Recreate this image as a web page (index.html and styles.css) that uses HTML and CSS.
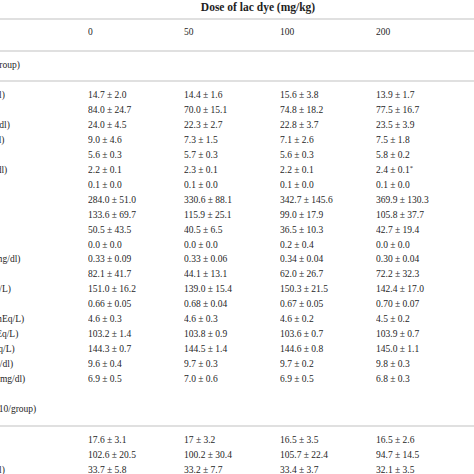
FILE: index.html
```html
<!DOCTYPE html>
<html lang="en">
<head>
<meta charset="utf-8">
<title>Serum biochemistry – lac dye</title>
<link rel="stylesheet" href="styles.css">
</head>
<body>
<div class="crop">
<table class="tbl">
  <colgroup>
    <col class="c-label">
    <col class="c-val">
    <col class="c-val">
    <col class="c-val">
    <col class="c-last">
  </colgroup>
  <thead>
    <tr class="title-row"><th colspan="5" class="title">Dose of lac dye (mg/kg)</th></tr>
    <tr class="dose-row"><th></th><th>0</th><th>50</th><th>100</th><th>200</th></tr>
  </thead>
  <tbody>
    <tr class="group-head"><td colspan="5">Main (n = 10/group)</td></tr>
    <tr class="first"><td class="lbl">T-Cho (mg/dl)</td><td>14.7 ± 2.0</td><td>14.4 ± 1.6</td><td>15.6 ± 3.8</td><td>13.9 ± 1.7</td></tr>
    <tr><td class="lbl">TC (mg/dl)</td><td>84.0 ± 24.7</td><td>70.0 ± 15.1</td><td>74.8 ± 18.2</td><td>77.5 ± 16.7</td></tr>
    <tr><td class="lbl">HDL-C (mg/dl)</td><td>24.0 ± 4.5</td><td>22.3 ± 2.7</td><td>22.8 ± 3.7</td><td>23.5 ± 3.9</td></tr>
    <tr><td class="lbl">NEFA (mg/dl)</td><td>9.0 ± 4.6</td><td>7.3 ± 1.5</td><td>7.1 ± 2.6</td><td>7.5 ± 1.8</td></tr>
    <tr><td class="lbl">TP (g/dl)</td><td>5.6 ± 0.3</td><td>5.7 ± 0.3</td><td>5.6 ± 0.3</td><td>5.8 ± 0.2</td></tr>
    <tr><td class="lbl">Albumin (g/dl)</td><td>2.2 ± 0.1</td><td>2.3 ± 0.1</td><td>2.2 ± 0.1</td><td>2.4 ± 0.1<sup class="sig">*</sup></td></tr>
    <tr><td class="lbl">TB (mg/dl)</td><td>0.1 ± 0.0</td><td>0.1 ± 0.0</td><td>0.1 ± 0.0</td><td>0.1 ± 0.0</td></tr>
    <tr><td class="lbl">ALP (U/L)</td><td>284.0 ± 51.0</td><td>330.6 ± 88.1</td><td>342.7 ± 145.6</td><td>369.9 ± 130.3</td></tr>
    <tr><td class="lbl">LDH (U/L)</td><td>133.6 ± 69.7</td><td>115.9 ± 25.1</td><td>99.0 ± 17.9</td><td>105.8 ± 37.7</td></tr>
    <tr><td class="lbl">ALT (U/L)</td><td>50.5 ± 43.5</td><td>40.5 ± 6.5</td><td>36.5 ± 10.3</td><td>42.7 ± 19.4</td></tr>
    <tr><td class="lbl">γ-GT (U/L)</td><td>0.0 ± 0.0</td><td>0.0 ± 0.0</td><td>0.2 ± 0.4</td><td>0.0 ± 0.0</td></tr>
    <tr><td class="lbl">Creatinine (mg/dl)</td><td>0.33 ± 0.09</td><td>0.33 ± 0.06</td><td>0.34 ± 0.04</td><td>0.30 ± 0.04</td></tr>
    <tr><td class="lbl">TG (mg/dl)</td><td>82.1 ± 41.7</td><td>44.1 ± 13.1</td><td>62.0 ± 26.7</td><td>72.2 ± 32.3</td></tr>
    <tr><td class="lbl">Amylase (IU/L)</td><td>151.0 ± 16.2</td><td>139.0 ± 15.4</td><td>150.3 ± 21.5</td><td>142.4 ± 17.0</td></tr>
    <tr><td class="lbl">A/G ratio</td><td>0.66 ± 0.05</td><td>0.68 ± 0.04</td><td>0.67 ± 0.05</td><td>0.70 ± 0.07</td></tr>
    <tr><td class="lbl">Potassium (mEq/L)</td><td>4.6 ± 0.3</td><td>4.6 ± 0.3</td><td>4.6 ± 0.2</td><td>4.5 ± 0.2</td></tr>
    <tr><td class="lbl">Chloride (mEq/L)</td><td>103.2 ± 1.4</td><td>103.8 ± 0.9</td><td>103.6 ± 0.7</td><td>103.9 ± 0.7</td></tr>
    <tr><td class="lbl">Sodium (mEq/L)</td><td>144.3 ± 0.7</td><td>144.5 ± 1.4</td><td>144.6 ± 0.8</td><td>145.0 ± 1.1</td></tr>
    <tr><td class="lbl">Calcium (mg/dl)</td><td>9.6 ± 0.4</td><td>9.7 ± 0.3</td><td>9.7 ± 0.2</td><td>9.8 ± 0.3</td></tr>
    <tr class="last"><td class="lbl">Phosphorus (mg/dl)</td><td>6.9 ± 0.5</td><td>7.0 ± 0.6</td><td>6.9 ± 0.5</td><td>6.8 ± 0.3</td></tr>
  </tbody>
  <tbody>
    <tr class="group-head"><td colspan="5">Recovery (n = 10/group)</td></tr>
    <tr class="first"><td class="lbl">ALT (U/L)</td><td>17.6 ± 3.1</td><td>17 ± 3.2</td><td>16.5 ± 3.5</td><td>16.5 ± 2.6</td></tr>
    <tr><td class="lbl">AST (U/L)</td><td>102.6 ± 20.5</td><td>100.2 ± 30.4</td><td>105.7 ± 22.4</td><td>94.7 ± 14.5</td></tr>
    <tr><td class="lbl">T-Cho (mg/dl)</td><td>33.7 ± 5.8</td><td>33.2 ± 7.7</td><td>33.4 ± 3.7</td><td>32.1 ± 3.5</td></tr>
    <tr><td class="lbl">TC (mg/dl)</td><td>72.4 ± 11.9</td><td>70.8 ± 13.6</td><td>75.1 ± 12.2</td><td>69.3 ± 10.4</td></tr>
  </tbody>
</table>
</div>
</body>
</html>
```

FILE: styles.css
```css
html, body {
  margin: 0;
  padding: 0;
  background: #ffffff;
}

body {
  width: 474px;
  height: 474px;
  overflow: hidden;
}

.crop {
  width: 474px;
  height: 474px;
  overflow: hidden;
}

.tbl {
  border-collapse: separate;
  border-spacing: 0;
  table-layout: fixed;
  width: 632px;
  margin-left: -58px;
  font-family: "Liberation Serif", "Times New Roman", serif;
  font-size: 9.5px;
  color: #262626;
}

.c-label { width: 146px; }
.c-val { width: 96px; }
.c-last { width: 198px; }

.tbl th,
.tbl td {
  padding: 0;
  line-height: 14.9px;
  text-align: left;
  font-weight: normal;
  white-space: nowrap;
  vertical-align: top;
  overflow: hidden;
}

.tbl .title {
  text-align: center;
  font-weight: bold;
  font-size: 11.5px;
  line-height: 14px;
  padding-bottom: 3.5px;
  color: #1e1e1e;
  border-bottom: 2px solid #e0e0e0;
}

.dose-row th {
  padding-top: 5.5px;
  padding-bottom: 9.6px;
  border-bottom: 2px solid #e0e0e0;
}

.group-head td {
  padding-top: 6px;
  padding-bottom: 7.7px;
  border-bottom: 2px solid #e0e0e0;
}

.first td {
  padding-top: 6.4px;
}

.last td {
  padding-bottom: 9.3px;
}

.tbl .lbl {
  padding-left: 8px;
}

.sig {
  font-size: 6.5px;
  line-height: 0;
  vertical-align: 3px;
}
```
